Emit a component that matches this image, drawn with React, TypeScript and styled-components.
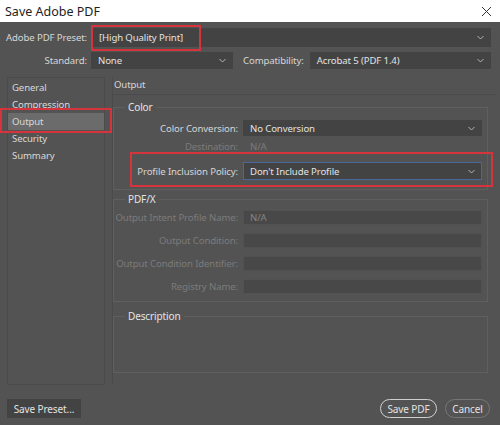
import styled, { createGlobalStyle } from 'styled-components';

const GlobalStyle = createGlobalStyle`
  html, body {
    margin: 0;
    padding: 0;
    background: #535353;
  }
  body {
    font-family: "Noto Sans", "DejaVu Sans", sans-serif;
    font-size: 9.6px;
    letter-spacing: -0.12px;
  }
`;

const Window = styled.div`
  width: 500px;
  height: 425px;
  display: flex;
  flex-direction: column;
  background: #535353;
  color: #d6d6d6;
  overflow: hidden;
`;

const TitleBar = styled.div`
  height: 22px;
  flex: none;
  background: #ffffff;
  display: flex;
  align-items: center;
  justify-content: space-between;
  padding: 0 8px 0 5px;
  color: #1e1e1e;
  font-size: 12.5px;
  letter-spacing: 0;
`;

const CloseButton = styled.span`
  display: flex;
  width: 11px;
  height: 11px;
`;

const TopRow = styled.div<{ $mt: number; $h: number }>`
  display: flex;
  align-items: center;
  height: ${(p) => p.$h}px;
  margin-top: ${(p) => p.$mt}px;
  padding-right: 9px;
`;

const Label = styled.span<{ $w?: number; $dim?: boolean; $ml?: number }>`
  flex: none;
  width: ${(p) => (p.$w ? `${p.$w}px` : 'auto')};
  margin-left: ${(p) => p.$ml ?? 0}px;
  text-align: right;
  white-space: nowrap;
  color: ${(p) => (p.$dim ? '#7b7b7b' : '#d6d6d6')};
`;

const Field = styled.div<{ $w?: number; $ml: number; $focus?: boolean; $dim?: boolean }>`
  position: relative;
  box-sizing: border-box;
  height: 100%;
  margin-left: ${(p) => p.$ml}px;
  ${(p) => (p.$w ? `width: ${p.$w}px; flex: none;` : 'flex: 1;')}
  display: flex;
  align-items: center;
  justify-content: space-between;
  padding: 0 6px 0 6px;
  background: ${(p) => (p.$dim ? '#484848' : '#434343')};
  border: 1px solid ${(p) => (p.$focus ? '#4a679b' : p.$dim ? '#515151' : '#434343')};
  color: ${(p) => (p.$dim ? '#858585' : '#e2e2e2')};
  white-space: nowrap;
`;

const Highlight = styled.span<{ $t: number; $r?: number; $b: number; $l: number; $w?: number }>`
  position: absolute;
  top: ${(p) => p.$t}px;
  bottom: ${(p) => p.$b}px;
  left: ${(p) => p.$l}px;
  ${(p) => (p.$w ? `width: ${p.$w}px;` : `right: ${p.$r}px;`)}
  border: 2.5px solid #d6343d;
  box-sizing: border-box;
  pointer-events: none;
`;

const Main = styled.div`
  display: flex;
  margin-top: 8px;
  padding-left: 7px;
`;

const Sidebar = styled.ul`
  margin: 0;
  padding: 1px 0 0;
  list-style: none;
  box-sizing: border-box;
  width: 98px;
  height: 308px;
  border: 1px solid #4b4b4b;
`;

const NavItem = styled.li<{ $active?: boolean }>`
  position: relative;
  height: 17px;
  line-height: 17px;
  padding-left: 4px;
  background: ${(p) => (p.$active ? '#6b6b6b' : 'transparent')};
  color: #d8d8d8;
`;

const Content = styled.div`
  display: flex;
  flex-direction: column;
  margin-left: 7px;
  width: 383px;
  height: 308px;
  border-left: 1px solid #4b4b4b;
`;

const PanelHeader = styled.div`
  height: 17px;
  line-height: 15px;
  padding-left: 1px;
  border-bottom: 1px solid #4b4b4b;
`;

const Group = styled.fieldset<{ $mt: number; $h: number }>`
  box-sizing: border-box;
  margin: ${(p) => p.$mt}px 0 0 0;
  width: 375px;
  height: ${(p) => p.$h}px;
  padding: 0 5px 0 0;
  border: 1px solid #5f5f5f;
  min-width: 0;
`;

const Legend = styled.legend`
  margin-left: 11px;
  padding: 0 3px;
  height: 14px;
  line-height: 14px;
  font-size: 10px;
  color: #e4e4e4;
`;

const FormRow = styled.div<{ $mt: number; $h: number }>`
  position: relative;
  display: flex;
  align-items: center;
  height: ${(p) => p.$h}px;
  margin-top: ${(p) => p.$mt}px;
`;

const PlainValue = styled.span`
  margin-left: 12px;
  color: #7b7b7b;
`;

const Footer = styled.div`
  display: flex;
  align-items: center;
  justify-content: space-between;
  height: 19px;
  margin-top: 14px;
  padding: 0 10px 0 7px;
`;

const Button = styled.button<{ $variant: 'flat' | 'primary' | 'secondary'; $w: number }>`
  box-sizing: border-box;
  width: ${(p) => p.$w}px;
  height: 19px;
  padding: 0;
  font-family: inherit;
  font-size: 10px;
  letter-spacing: -0.1px;
  color: #e2e2e2;
  background: ${(p) => (p.$variant === 'flat' ? '#434343' : 'transparent')};
  border: ${(p) =>
    p.$variant === 'flat'
      ? 'none'
      : p.$variant === 'primary'
      ? '1.5px solid #cfcfcf'
      : '1px solid #767676'};
  border-radius: ${(p) => (p.$variant === 'flat' ? '0' : '10px')};
`;

const ButtonGroup = styled.div`
  display: flex;
  gap: 8px;
`;

const Chevron = ({ dim }: { dim?: boolean }) => (
  <svg width="7" height="5" viewBox="0 0 7 5">
    <polyline
      points="0.5,1 3.5,4 6.5,1"
      fill="none"
      stroke={dim ? '#777' : '#b5b5b5'}
      strokeWidth="1"
    />
  </svg>
);

const navItems = ['General', 'Compression', 'Output', 'Security', 'Summary'];

const pdfxRows = [
  { label: 'Output Intent Profile Name:', value: 'N/A' },
  { label: 'Output Condition:', value: '' },
  { label: 'Output Condition Identifier:', value: '' },
  { label: 'Registry Name:', value: '' },
];

export default function App() {
  return (
    <>
      <GlobalStyle />
      <Window>
        <TitleBar>
          <span>Save Adobe PDF</span>
          <CloseButton>
            <svg width="11" height="11" viewBox="0 0 11 11">
              <path d="M1 1 L10 10 M10 1 L1 10" stroke="#333" strokeWidth="1" />
            </svg>
          </CloseButton>
        </TitleBar>

        <TopRow $mt={6} $h={19}>
          <Label $w={87}>Adobe PDF Preset:</Label>
          <Field $ml={5}>
            <span>[High Quality Print]</span>
            <Chevron />
            <Highlight $t={-4} $b={-5} $l={-2} $w={110} />
          </Field>
        </TopRow>

        <TopRow $mt={5} $h={17}>
          <Label $w={87}>Standard:</Label>
          <Field $ml={4} $w={142}>
            <span>None</span>
            <Chevron />
          </Field>
          <Label $ml={10}>Compatibility:</Label>
          <Field $ml={6}>
            <span>Acrobat 5 (PDF 1.4)</span>
            <Chevron />
          </Field>
        </TopRow>

        <Main>
          <Sidebar>
            {navItems.map((item) => (
              <NavItem key={item} $active={item === 'Output'}>
                {item}
                {item === 'Output' && <Highlight $t={-5} $b={-3} $l={-8} $r={-8} />}
              </NavItem>
            ))}
          </Sidebar>

          <Content>
            <PanelHeader>Output</PanelHeader>

            <Group $mt={5} $h={90}>
              <Legend>Color</Legend>
              <FormRow $mt={6} $h={16}>
                <Label $w={124}>Color Conversion:</Label>
                <Field $ml={5}>
                  <span>No Conversion</span>
                  <Chevron />
                </Field>
              </FormRow>
              <FormRow $mt={2} $h={16}>
                <Label $w={124} $dim>
                  Destination:
                </Label>
                <PlainValue>N/A</PlainValue>
              </FormRow>
              <FormRow $mt={8} $h={18}>
                <Label $w={124}>Profile Inclusion Policy:</Label>
                <Field $ml={5} $focus>
                  <span>Don't Include Profile</span>
                  <Chevron />
                </Field>
                <Highlight $t={-10} $b={-7} $l={16} $r={-11} />
              </FormRow>
            </Group>

            <Group $mt={2} $h={110}>
              <Legend>PDF/X</Legend>
              {pdfxRows.map((row, i) => (
                <FormRow key={row.label} $mt={i === 0 ? 4 : 8} $h={15}>
                  <Label $w={124} $dim>
                    {row.label}
                  </Label>
                  <Field $ml={5} $dim>
                    <span>{row.value}</span>
                  </Field>
                </FormRow>
              ))}
            </Group>

            <Group $mt={7} $h={64}>
              <Legend>Description</Legend>
            </Group>
          </Content>
        </Main>

        <Footer>
          <Button $variant="flat" $w={74}>
            Save Preset...
          </Button>
          <ButtonGroup>
            <Button $variant="primary" $w={57}>
              Save PDF
            </Button>
            <Button $variant="secondary" $w={45}>
              Cancel
            </Button>
          </ButtonGroup>
        </Footer>
      </Window>
    </>
  );
}
